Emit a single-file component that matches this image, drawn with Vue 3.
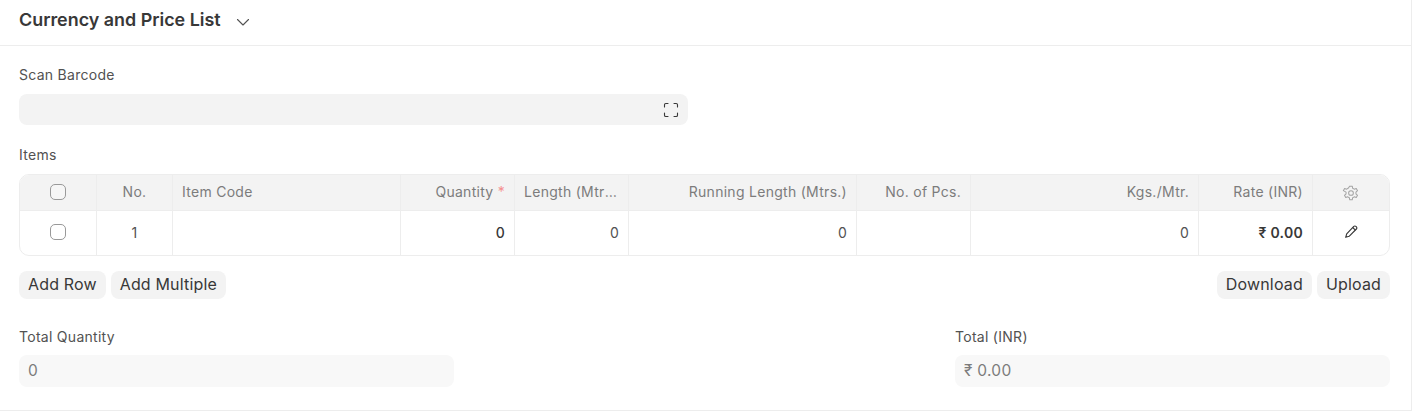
<template>
  <div class="page">
    <div class="form">
      <div class="section-head">
        <span class="section-title">Currency and Price List</span>
        <svg class="chevron" width="16" height="16" viewBox="0 0 16 16" fill="none">
          <path d="M2.500 5.500 8 11l5.500-5.500" stroke="#525252" stroke-width="1.100" stroke-linecap="round" stroke-linejoin="round" />
        </svg>
      </div>

      <div class="section-body">
        <div class="label">Scan Barcode</div>
        <div class="barcode">
          <svg width="16" height="16" viewBox="0 0 16 16" fill="none">
            <path d="M1.500 5V2.800c0-.7.6-1.300 1.300-1.300H5M11 1.500h2.200c.7 0 1.300.6 1.300 1.300V5M14.500 11v2.200c0 .7-.6 1.300-1.300 1.300H11M5 14.500H2.800c-.7 0-1.300-.6-1.300-1.300V11" stroke="#383838" stroke-width="1.100" stroke-linecap="round" />
          </svg>
        </div>

        <div class="label items-label">Items</div>
        <div class="grid">
          <div class="row head">
            <div class="cell center"><span class="check"></span></div>
            <div class="cell center">No.</div>
            <div class="cell">Item Code</div>
            <div class="cell right">Quantity&nbsp;<span class="req">*</span></div>
            <div class="cell ellipsis">Length (Mtrs.)</div>
            <div class="cell right">Running Length (Mtrs.)</div>
            <div class="cell right">No. of Pcs.</div>
            <div class="cell right">Kgs./Mtr.</div>
            <div class="cell right">Rate (INR)</div>
            <div class="cell center">
              <svg class="gear" width="18" height="18" viewBox="0 -0.700 16 16" fill="none" stroke="#a3a3a3" stroke-width="0.900">
                <path d="M6.900 1.200h2.200l.4 1.900 1.400.8 1.800-.6 1.100 1.900-1.400 1.300v1.600l1.400 1.300-1.100 1.900-1.800-.6-1.400.8-.4 1.900H6.900l-.4-1.900-1.400-.8-1.800.6-1.100-1.900 1.400-1.300V6.500L1.200 5.200l1.100-1.900 1.800.6 1.400-.8z" stroke-linejoin="round" />
                <circle cx="8" cy="7.300" r="2.100" />
              </svg>
            </div>
          </div>
          <div class="row body">
            <div class="cell center"><span class="check"></span></div>
            <div class="cell center">1</div>
            <div class="cell"></div>
            <div class="cell right strong">0</div>
            <div class="cell right">0</div>
            <div class="cell right">0</div>
            <div class="cell right"></div>
            <div class="cell right">0</div>
            <div class="cell right bold">₹ 0.00</div>
            <div class="cell center">
              <svg width="16" height="16" viewBox="0 0 16 16" fill="none" stroke="#383838" stroke-width="1.150" stroke-linejoin="round">
                <path d="M10.800 2.400c.6-.6 1.500-.6 2.100 0l.5.5c.6.600.6 1.500 0 2.100l-7.300 7.300-3.400 1 1-3.400z" />
                <path d="M9.700 3.500l2.700 2.700" />
              </svg>
            </div>
          </div>
        </div>

        <div class="actions">
          <div class="btn-group">
            <span class="btn">Add Row</span>
            <span class="btn">Add Multiple</span>
          </div>
          <div class="btn-group">
            <span class="btn">Download</span>
            <span class="btn">Upload</span>
          </div>
        </div>

        <div class="totals">
          <div class="total-col">
            <div class="label">Total Quantity</div>
            <div class="readonly">0</div>
          </div>
          <div class="total-col">
            <div class="label">Total (INR)</div>
            <div class="readonly">₹ 0.00</div>
          </div>
        </div>
      </div>
    </div>
  </div>
</template>

<script setup>
</script>

<style>
html, body {
  margin: 0;
  background: #fff;
}
</style>

<style scoped>
.page {
  width: 1421px;
  height: 415px;
  overflow: hidden;
  font-family: Inter, "Liberation Sans", sans-serif;
  font-size: 14px;
  letter-spacing: 0.02em;
  color: #383838;
  background: #fff;
}
.form {
  width: 1412px;
  height: 411px;
  box-sizing: border-box;
  border-right: 1px solid #ededed;
  border-bottom: 1px solid #ededed;
}
.section-head {
  height: 46px;
  box-sizing: border-box;
  display: flex;
  align-items: center;
  gap: 14px;
  padding: 0 19px 7px;
  border-bottom: 1px solid #ededed;
}
.section-title {
  font-size: 17.900px;
  font-weight: 600;
  letter-spacing: 0;
  color: #383838;
}
.chevron {
  margin-top: 5px;
}
.section-body {
  padding: 21px 21px 0 19px;
}
.label {
  height: 16px;
  line-height: 16px;
  color: #525252;
  margin-bottom: 11px;
}
.barcode {
  width: 669px;
  height: 31px;
  box-sizing: border-box;
  background: #f3f3f3;
  border-radius: 8px;
  display: flex;
  align-items: center;
  justify-content: flex-end;
  padding-right: 9px;
}
.items-label {
  margin-top: 22px;
  margin-bottom: 11px;
}
.grid {
  width: 1371px;
  height: 82px;
  box-sizing: border-box;
  border: 1px solid #ededed;
  border-radius: 10px;
  overflow: hidden;
}
.row {
  display: grid;
  grid-template-columns: 77px 76px 228px 114px 114px 228px 114px 228px 114px 1fr;
}
.head {
  height: 36px;
  background: #f3f3f3;
  color: #7c7c7c;
  border-bottom: 1px solid #ededed;
  box-sizing: border-box;
}
.body {
  height: 44px;
  color: #525252;
}
.cell {
  display: flex;
  align-items: center;
  padding: 0 9px 2px;
  min-width: 0;
  box-sizing: border-box;
  border-right: 1px solid #ededed;
  white-space: nowrap;
}
.cell:last-child {
  border-right: none;
}
.center {
  justify-content: center;
}
.right {
  justify-content: flex-end;
}
.ellipsis {
  display: block;
  padding-bottom: 0;
  line-height: 34px;
  overflow: hidden;
  text-overflow: ellipsis;
}
.gear {
  margin-top: 2px;
}
.req {
  color: #f58f8f;
}
.strong {
  color: #383838;
  font-weight: 500;
}
.bold {
  color: #383838;
  font-weight: 600;
}
.check {
  width: 16px;
  height: 16px;
  box-sizing: border-box;
  border: 1px solid #999;
  border-radius: 5px;
  background: #fff;
}
.head .check {
  background: #f6f6f6;
}
.actions {
  display: flex;
  justify-content: space-between;
  margin-top: 15px;
}
.btn-group {
  display: flex;
  gap: 5px;
}
.btn {
  height: 28px;
  line-height: 26px;
  padding: 0 9px;
  border-radius: 8px;
  background: #f3f3f3;
  font-size: 16px;
  letter-spacing: 0.01em;
  color: #383838;
}
.totals {
  display: grid;
  grid-template-columns: 435px 435px;
  justify-content: space-between;
  margin-top: 30px;
}
.total-col .label {
  margin-bottom: 10px;
}
.readonly {
  height: 32px;
  line-height: 32px;
  padding: 0 9px;
  border-radius: 8px;
  background: #f8f8f8;
  font-size: 15.500px;
  color: #7c7c7c;
}
</style>
